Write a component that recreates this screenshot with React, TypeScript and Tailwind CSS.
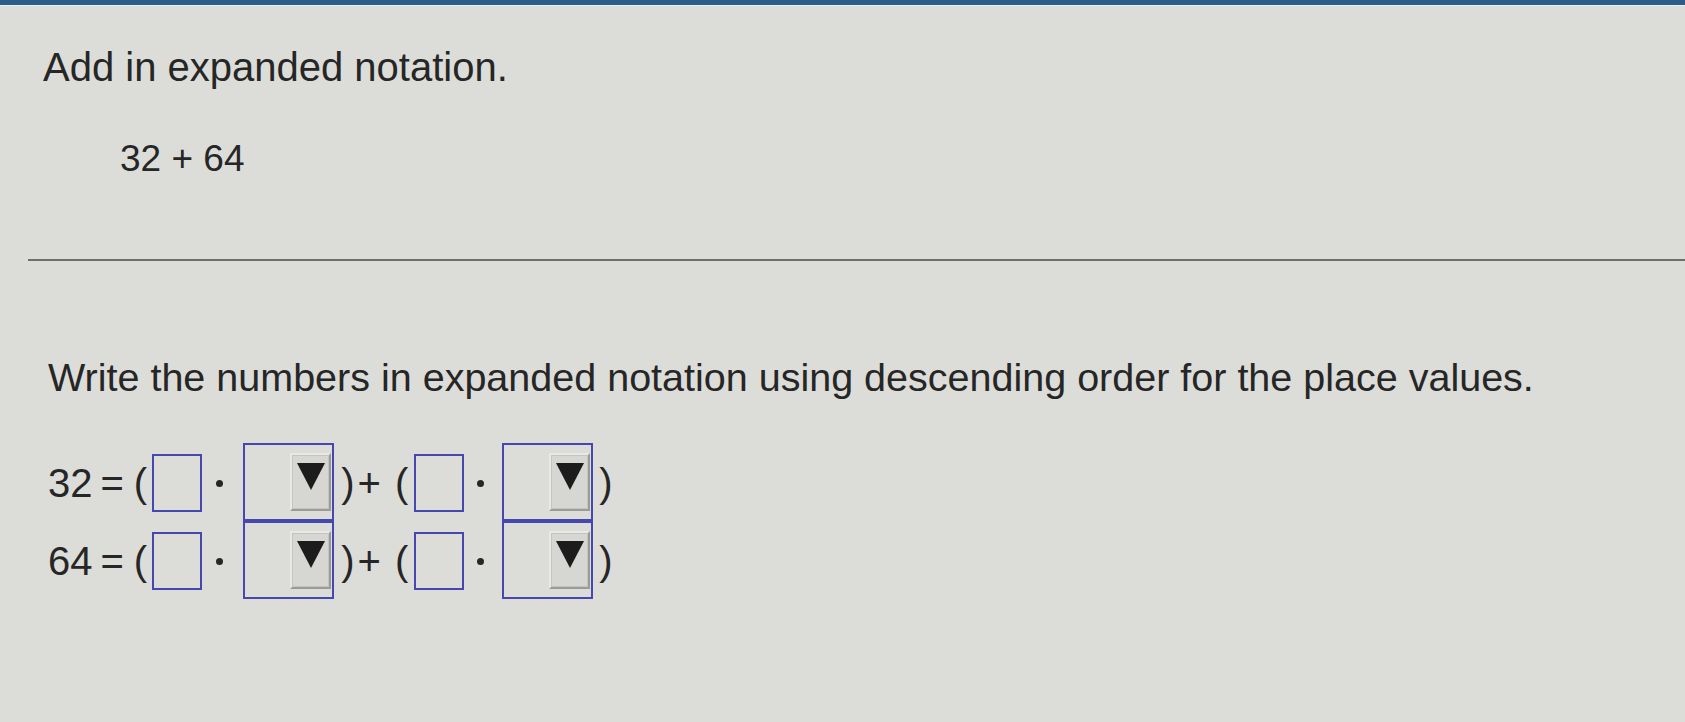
import React from "react";

const BLUE = "border-[#4747b0]";

function Arrow() {
  return (
    <div className="w-[41px] h-[58px] bg-[#d6d6d2] border-2 border-t-[#e8e8e4] border-l-[#e8e8e4] border-b-[#9b9b98] border-r-[#9b9b98] flex justify-center pt-[8px] shadow-[inset_0_0_0_1px_#c4c4c0]">
      <svg width="28" height="27" viewBox="0 0 28 27">
        <polygon points="0,0 28,0 14,27" fill="#1c1c1c" />
      </svg>
    </div>
  );
}

function Row({ num, top }: { num: string; top: boolean }) {
  const dd = top
    ? `border-t-2 border-x-2 border-b-4 ${BLUE} h-[80px]`
    : `border-b-2 border-x-2 ${BLUE} h-[76px]`;
  return (
    <div className={`flex items-center pl-[48px] ${top ? "h-[80px]" : "h-[76px]"} text-[40px] leading-none text-[#262626]`}>
      <span>{num}</span>
      <span className="ml-[8px]">=</span>
      <span className="ml-[10px]">(</span>
      <div className={`ml-[5px] w-[50px] h-[58px] border-2 ${BLUE}`} />
      <div className="ml-[14px] w-[7px] h-[7px] rounded-full bg-[#262626]" />
      <div className={`ml-[20px] w-[91px] ${dd} flex items-center justify-end pr-[1px]`}>
        <Arrow />
      </div>
      <span className="ml-[7px]">)</span>
      <span className="ml-[3px]">+</span>
      <span className="ml-[14px]">(</span>
      <div className={`ml-[6px] w-[50px] h-[58px] border-2 ${BLUE}`} />
      <div className="ml-[13px] w-[7px] h-[7px] rounded-full bg-[#262626]" />
      <div className={`ml-[18px] w-[91px] ${dd} flex items-center justify-end pr-[1px]`}>
        <Arrow />
      </div>
      <span className="ml-[6px]">)</span>
    </div>
  );
}

export default function App() {
  return (
    <div
      className="w-[1685px] h-[722px] overflow-hidden bg-[#dcdcd8] flex flex-col text-[#262626]"
      style={{ fontFamily: '"Liberation Sans", Arial, sans-serif' }}
    >
      <div className="h-[5px] bg-[#2b5b8b]" />
      <div className="h-[1px] bg-[#eef0f0]" />
      <div className="mt-[41px] pl-[43px] text-[40px] leading-[40px]">Add in expanded notation.</div>
      <div className="mt-[53px] pl-[120px] text-[37px] leading-[37px]">32 + 64</div>
      <div className="mt-[82px] ml-[28px] h-[2px] bg-[#6f6f6f]" />
      <div className="mt-[96px] pl-[48px] text-[39.5px] leading-[40px]">
        Write the numbers in expanded notation using descending order for the place values.
      </div>
      <div className="mt-[46px] flex flex-col">
        <Row num="32" top={true} />
        <Row num="64" top={false} />
      </div>
    </div>
  );
}
